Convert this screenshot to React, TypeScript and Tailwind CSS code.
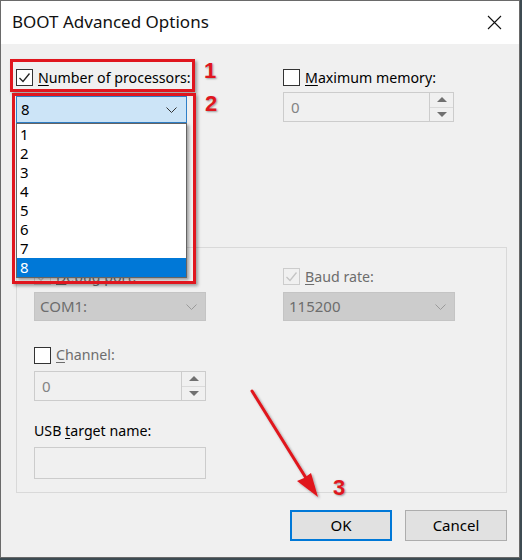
import React from 'react';

const FONT = { fontFamily: '"Noto Sans", "Open Sans", sans-serif' };

function Check({ checked, disabled }: { checked?: boolean; disabled?: boolean }) {
  return (
    <div
      className={`w-[17px] h-[17px] shrink-0 border flex items-center justify-center ${
        disabled ? 'border-[#cccccc] bg-[#f0f0f0]' : 'border-[#333333] bg-white'
      }`}
    >
      {checked && (
        <svg width="15" height="15" viewBox="0 0 15 15">
          <polyline
            points="2.5,8 6,11.5 12.5,3.5"
            fill="none"
            stroke={disabled ? '#c4c4c4' : '#222222'}
            strokeWidth="1.3"
          />
        </svg>
      )}
    </div>
  );
}

function Chevron({ color }: { color: string }) {
  return (
    <svg width="11" height="6" viewBox="0 0 11 6">
      <polyline points="0.5,0.5 5.5,5.5 10.5,0.5" fill="none" stroke={color} strokeWidth="1" />
    </svg>
  );
}

function Spinner({ value, w }: { value: string; w: string }) {
  return (
    <div className={`${w} h-[30px] border border-[#cccccc] bg-[#f0f0f0] flex`}>
      <div className="flex-1 flex items-center pl-[7px] text-[15px] text-[#838383]">{value}</div>
      <div className="w-[24px] border-l border-[#cccccc] flex flex-col">
        <div className="flex-1 flex items-center justify-center border-b border-[#dadada]">
          <div className="w-0 h-0 border-x-[5px] border-x-transparent border-b-[5px] border-b-[#707070]" />
        </div>
        <div className="flex-1 flex items-center justify-center">
          <div className="w-0 h-0 border-x-[5px] border-x-transparent border-t-[5px] border-t-[#707070]" />
        </div>
      </div>
    </div>
  );
}

function DisabledCombo({ value }: { value: string }) {
  return (
    <div className="w-[172px] h-[29px] bg-[#cccccc] border border-[#c4c4c4] flex items-center justify-between pl-[5px] pr-[8px] text-[15px] text-[#6d6d6d]">
      <span>{value}</span>
      <Chevron color="#9a9a9a" />
    </div>
  );
}

export default function App() {
  const items = ['1', '2', '3', '4', '5', '6', '7', '8'];

  return (
    <div className="relative w-[522px] h-[560px] bg-[#3d4b52] overflow-hidden" style={FONT}>
      {/* window */}
      <div className="w-[520px] h-[558px] border border-[#6a6a6a] bg-[#f0f0f0] flex flex-col">
        {/* title bar */}
        <div className="h-[43px] bg-white flex items-center justify-between pl-[11px] pr-[17px]">
          <span className="text-[17px] text-[#111111] pb-[1px]">BOOT Advanced Options</span>
          <svg width="15" height="15" viewBox="0 0 15 15">
            <path d="M1 1 L14 14 M14 1 L1 14" stroke="#111111" strokeWidth="1.1" />
          </svg>
        </div>

        {/* body */}
        <div className="flex flex-col pl-[15px] pt-[23px] text-[14.2px] text-black">
          <div className="grid grid-cols-[267px_1fr] h-[20px] items-center">
            <div className="flex items-center gap-[5px]">
              <Check checked />
              <span>
                <span className="underline underline-offset-2">N</span>umber of processors:
              </span>
            </div>
            <div className="flex items-center gap-[5px]">
              <Check />
              <span>
                <span className="underline underline-offset-2">M</span>aximum memory:
              </span>
            </div>
          </div>

          <div className="grid grid-cols-[267px_1fr] mt-[5px] items-start">
            <div className="mt-[4px] w-[171px] h-[27px] bg-[#cce4f7] border border-[#2f7fc8] flex items-center justify-between pl-[4px] pr-[9px] text-[15px]">
              <span>8</span>
              <Chevron color="#333333" />
            </div>
            <Spinner value="0" w="w-[171px]" />
          </div>

          {/* debug settings group */}
          <div className="mt-[124px] w-[491px] h-[246px] border border-[#d9d9d9] pl-[17px] pt-[18px] flex flex-col">
            <div className="grid grid-cols-[249px_1fr] h-[20px] items-center text-[#6d6d6d]">
              <div className="flex items-center gap-[5px]">
                <Check checked disabled />
                <span>
                  <span className="underline underline-offset-2">D</span>ebug port:
                </span>
              </div>
              <div className="flex items-center gap-[5px]">
                <Check checked disabled />
                <span>
                  <span className="underline underline-offset-2">B</span>aud rate:
                </span>
              </div>
            </div>
            <div className="grid grid-cols-[249px_1fr] mt-[6px]">
              <DisabledCombo value="COM1:" />
              <DisabledCombo value="115200" />
            </div>
            <div className="flex items-center gap-[5px] h-[20px] mt-[24px] text-[#6d6d6d]">
              <Check />
              <span>
                <span className="underline underline-offset-2">C</span>hannel:
              </span>
            </div>
            <div className="mt-[6px]">
              <Spinner value="0" w="w-[172px]" />
            </div>
            <div className="h-[20px] mt-[20px] flex items-center">
              <span>
                USB <span className="underline underline-offset-2">t</span>arget name:
              </span>
            </div>
            <div className="mt-[6px] w-[172px] h-[32px] border border-[#cccccc] bg-[#f0f0f0]" />
          </div>

          {/* buttons */}
          <div className="w-[491px] flex justify-end gap-[13px] mt-[17px]">
            <button className="w-[102px] h-[31px] bg-[#e1e1e1] border-2 border-[#0078d7] text-[15px]">OK</button>
            <button className="w-[102px] h-[31px] bg-[#e1e1e1] border border-[#adadad] text-[15px]">Cancel</button>
          </div>
        </div>
      </div>

      {/* dropdown list */}
      <div className="absolute left-[16px] top-[123px] w-[171px] h-[155px] bg-white border border-[#646464] shadow-[2px_2px_3px_rgba(0,0,0,0.35)] pt-[1px] flex flex-col text-[15px]">
        {items.map((n) => (
          <div
            key={n}
            className={`h-[19px] pl-[3px] flex items-center ${
              n === '8' ? 'bg-[#0078d7] text-white' : 'text-black'
            }`}
          >
            {n}
          </div>
        ))}
      </div>

      {/* annotations */}
      <div className="absolute left-[10px] top-[59px] w-[185px] h-[33px] border-[3px] border-[#e0161e] shadow-[2px_2px_3px_rgba(0,0,0,0.35)]" />
      <div className="absolute left-[12px] top-[93px] w-[184px] h-[191px] border-[3px] border-[#e0161e] shadow-[2px_2px_3px_rgba(0,0,0,0.35)]" />
      <span
        className="absolute left-[204px] top-[60px] text-[22px] font-bold text-[#e0161e] leading-none [text-shadow:1px_1px_2px_rgba(0,0,0,0.35)]"
        style={{ fontFamily: '"Liberation Sans", Arial, sans-serif' }}
      >
        1
      </span>
      <span
        className="absolute left-[205px] top-[93px] text-[22px] font-bold text-[#e0161e] leading-none [text-shadow:1px_1px_2px_rgba(0,0,0,0.35)]"
        style={{ fontFamily: '"Liberation Sans", Arial, sans-serif' }}
      >
        2
      </span>
      <span
        className="absolute left-[333px] top-[477px] text-[22px] font-bold text-[#e0161e] leading-none [text-shadow:1px_1px_2px_rgba(0,0,0,0.35)]"
        style={{ fontFamily: '"Liberation Sans", Arial, sans-serif' }}
      >
        3
      </span>
      <svg className="absolute left-0 top-0" width="522" height="560" viewBox="0 0 522 560">
        <defs>
          <filter id="sh" x="-20%" y="-20%" width="140%" height="140%">
            <feDropShadow dx="1.5" dy="1.5" stdDeviation="1.2" floodColor="#000" floodOpacity="0.35" />
          </filter>
        </defs>
        <g filter="url(#sh)">
          <line x1="252" y1="391" x2="306" y2="478" stroke="#e0161e" strokeWidth="3" strokeLinecap="round" />
          <polygon points="318,497 297,481 304,478 311,473" fill="#e0161e" />
        </g>
      </svg>
    </div>
  );
}
